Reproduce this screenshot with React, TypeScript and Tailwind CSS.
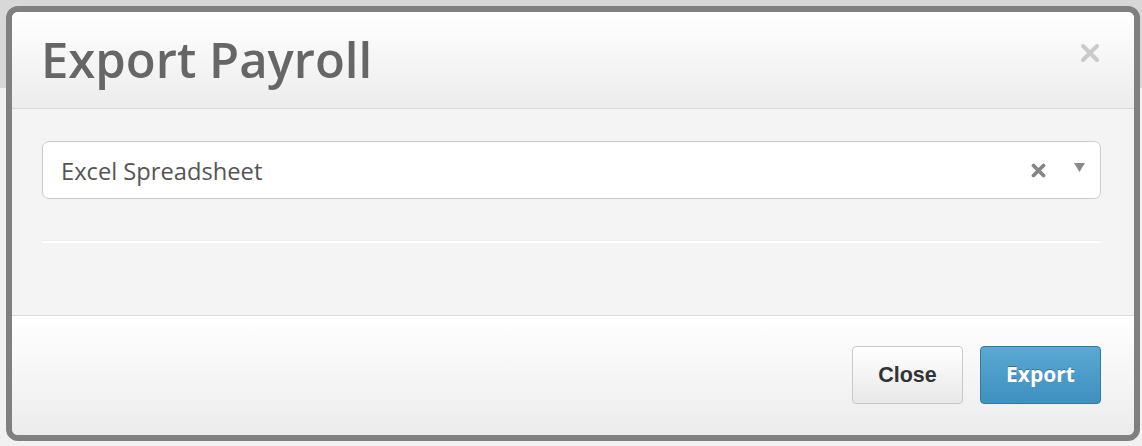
import React from 'react';

// ================= Select =================
const FormatSelect: React.FC<{ value: string }> = ({ value }) => (
  <div className="flex items-center h-[58px] bg-white border border-[#cccccc] rounded-[7px] pl-[18px] pr-[15px]">
    <span className="flex-1 text-[23.7px] text-[#555555] font-['Open_Sans',sans-serif] pt-[3px]">{value}</span>
    <svg width="15" height="15" viewBox="0 0 15 15" className="mr-[28px]">
      <path d="M2.5 2.5 L12.5 12.5 M12.5 2.5 L2.5 12.5" stroke="#868686" strokeWidth="3.8" strokeLinecap="round" />
    </svg>
    <svg width="11" height="9" viewBox="0 0 11 9" className="mb-[6px]">
      <path d="M0 0 H11 L5.5 9 Z" fill="#8a8a8a" />
    </svg>
  </div>
);

// ================= Main Component =================
export default function App() {
  return (
    <div className="w-[1142px] h-[446px] pt-[6px] pl-[6px] bg-[linear-gradient(to_bottom,#d8d8d8_0,#d8d8d8_88px,#f1f1f1_88px,#f1f1f1_100%)] overflow-hidden">
      <div className="w-[1134px] h-[435px] border-[6px] border-[#808080] rounded-[12px] overflow-hidden flex flex-col bg-[#f4f4f4]">
        {/* ================= Header ================= */}
        <div className="h-[97px] shrink-0 flex items-center justify-between pl-[29px] pr-[34px] border-b border-[#d8d8d8] bg-[linear-gradient(to_bottom,#ffffff,#ececec)]">
          <h3 className="text-[49px] font-semibold text-[#666666] font-['Open_Sans',sans-serif] leading-none pb-[2px]">
            Export Payroll
          </h3>
          <svg width="20" height="20" viewBox="0 0 20 20" className="mb-[14px]">
            <path d="M3 3 L17 17 M17 3 L3 17" stroke="#cacaca" strokeWidth="4" strokeLinecap="round" />
          </svg>
        </div>

        {/* ================= Body ================= */}
        <div className="h-[206px] shrink-0 pt-[32px] pl-[30px] pr-[33px] bg-[#f4f4f4]">
          <FormatSelect value="Excel Spreadsheet" />
          <div className="mt-[41px] border-t border-[#ececec] border-b-2 border-b-white" />
        </div>

        {/* ================= Footer ================= */}
        <div className="flex-1 flex justify-end items-start gap-[17px] pt-[30px] pr-[33px] border-t border-[#dadada] bg-[linear-gradient(to_bottom,#ffffff,#ececec)]">
          <button className="w-[111px] h-[58px] rounded-[4px] border border-[#c8c8c8] bg-[linear-gradient(to_bottom,#ffffff,#e8e8e8)] text-[21.5px] font-bold text-[#333333] font-['Liberation_Sans',sans-serif]">
            Close
          </button>
          <button className="w-[121px] h-[58px] rounded-[4px] border border-[#35799f] bg-[linear-gradient(to_bottom,#5aa8d3,#3f90c0)] text-[21px] font-bold text-white font-['Open_Sans',sans-serif] [text-shadow:0_-1px_0_rgba(0,0,0,0.3)]">
            Export
          </button>
        </div>
      </div>
    </div>
  );
}
